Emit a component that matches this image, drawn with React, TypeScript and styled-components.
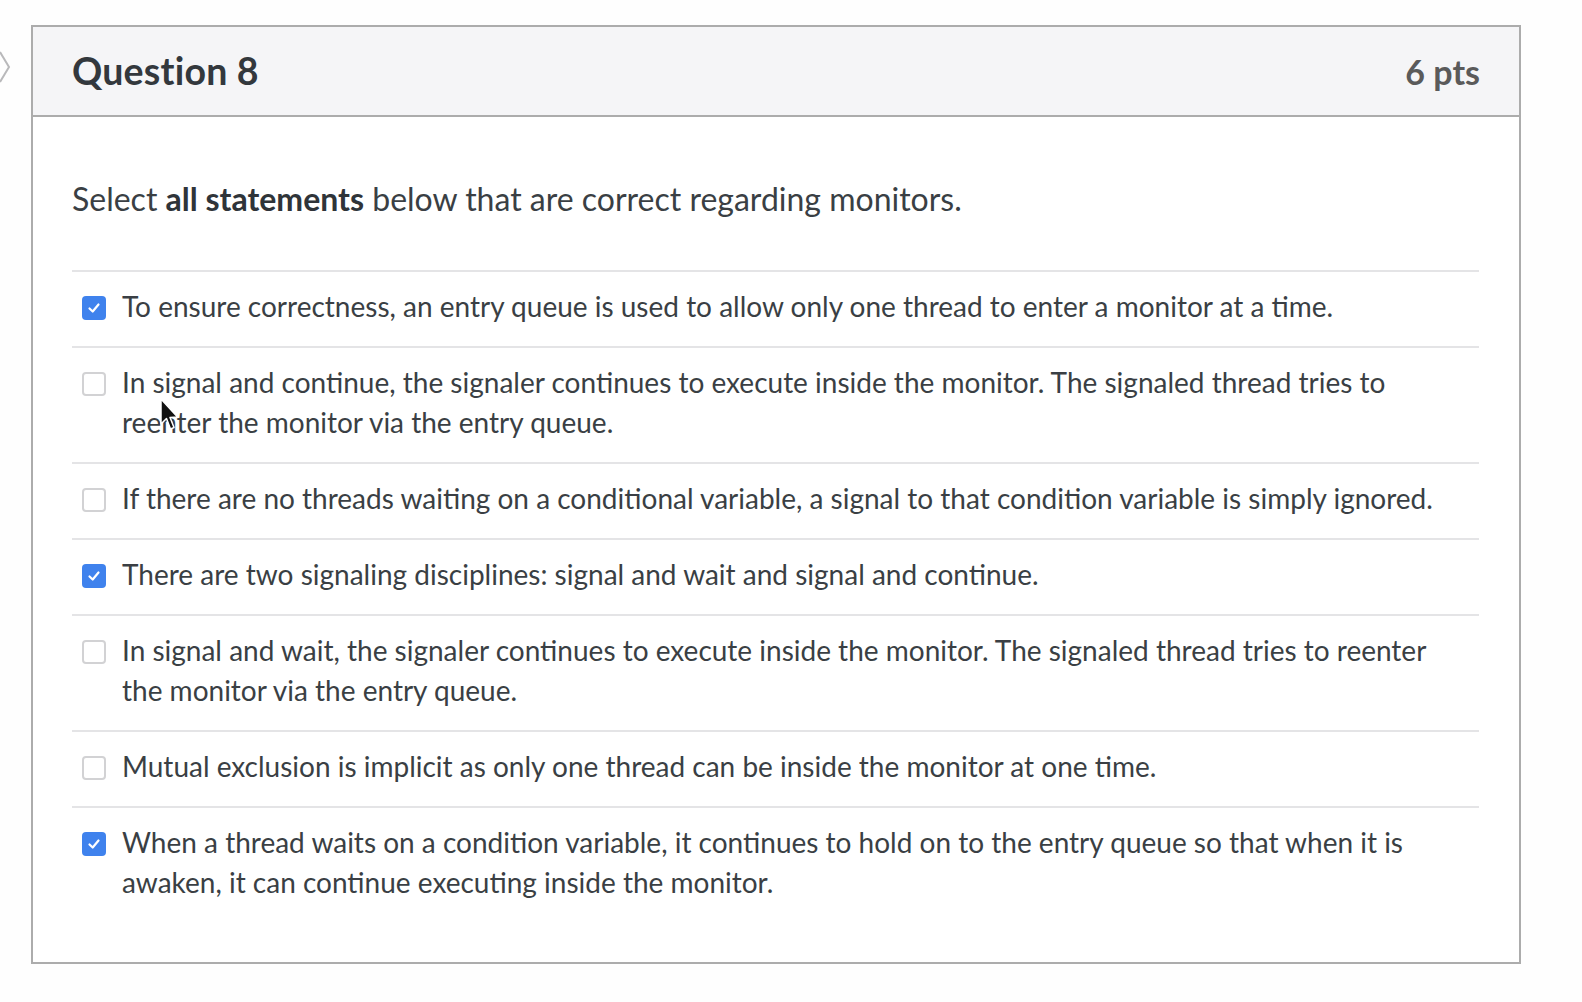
import React from 'react';
import styled, { createGlobalStyle } from 'styled-components';

const GlobalStyle = createGlobalStyle`
  html, body {
    margin: 0;
    padding: 0;
    background: #fefefe;
  }
  body {
    font-family: Lato, "Open Sans", "Liberation Sans", sans-serif;
    color: #3a3f44;
  }
`;

const Page = styled.div`
  position: relative;
  width: 1582px;
  height: 1002px;
  padding: 25px 0 0 31px;
  box-sizing: border-box;
`;

const SideChevron = styled.svg`
  position: absolute;
  left: -6px;
  top: 50px;
`;

const Card = styled.section`
  width: 1490px;
  box-sizing: border-box;
  border: 2px solid #acacac;
  background: #fff;
`;

const Header = styled.header`
  display: flex;
  align-items: center;
  justify-content: space-between;
  height: 88px;
  padding: 0 39px 0 39px;
  background: #f5f5f7;
  border-bottom: 2px solid #acacac;
`;

const Title = styled.h2`
  margin: 0;
  font-size: 37.5px;
  font-weight: 700;
  color: #33383d;
  letter-spacing: 0.2px;
  padding-bottom: 2px;
`;

const Points = styled.div`
  font-size: 34px;
  font-weight: 700;
  color: #5a5a5a;
`;

const Body = styled.div`
  padding: 62px 40px 40px 39px;
`;

const Prompt = styled.p`
  margin: 0 0 51px;
  font-size: 32px;
  line-height: 40px;
  color: #3a3f44;
  & strong {
    font-weight: 700;
    color: #2f3439;
  }
`;

const Answers = styled.div`
  display: flex;
  flex-direction: column;
`;

const Answer = styled.label`
  display: flex;
  align-items: flex-start;
  gap: 16px;
  padding: 14px 0 20px 10px;
  border-top: 2px solid #e4e4e6;
  font-size: 28px;
  line-height: 40px;
  color: #3a3f44;
`;

const Box = styled.span<{ $checked: boolean }>`
  flex: none;
  width: 24px;
  height: 24px;
  margin-top: 10px;
  box-sizing: border-box;
  border-radius: 4px;
  display: flex;
  align-items: center;
  justify-content: center;
  border: ${(p) => (p.$checked ? 'none' : '2px solid #d2d2d4')};
  background: ${(p) => (p.$checked ? '#3f82ed' : '#fff')};
`;

const AnswerText = styled.span`
  flex: 1;
  padding-right: 20px;
`;

const Cursor = styled.svg`
  position: absolute;
  left: 159px;
  top: 398px;
`;

const answers = [
  { text: 'To ensure correctness, an entry queue is used to allow only one thread to enter a monitor at a time.', checked: true },
  { text: 'In signal and continue, the signaler continues to execute inside the monitor. The signaled thread tries to reenter the monitor via the entry queue.', checked: false },
  { text: 'If there are no threads waiting on a conditional variable, a signal to that condition variable is simply ignored.', checked: false },
  { text: 'There are two signaling disciplines: signal and wait and signal and continue.', checked: true },
  { text: 'In signal and wait, the signaler continues to execute inside the monitor. The signaled thread tries to reenter the monitor via the entry queue.', checked: false },
  { text: 'Mutual exclusion is implicit as only one thread can be inside the monitor at one time.', checked: false },
  { text: 'When a thread waits on a condition variable, it continues to hold on to the entry queue so that when it is awaken, it can continue executing inside the monitor.', checked: true },
];

function Check() {
  return (
    <svg width="16" height="16" viewBox="0 0 16 16">
      <path d="M3.5 8.5 L6.7 11.5 L12.5 4.5" fill="none" stroke="#fff" strokeWidth="2.2" strokeLinecap="round" strokeLinejoin="round" />
    </svg>
  );
}

export default function App() {
  return (
    <Page>
      <GlobalStyle />
      <SideChevron width="20" height="36" viewBox="0 0 20 36">
        <path d="M6 2 L15 17 L6 32" fill="none" stroke="#b9b9bb" strokeWidth="2" />
      </SideChevron>
      <Card>
        <Header>
          <Title>Question 8</Title>
          <Points>6 pts</Points>
        </Header>
        <Body>
          <Prompt>
            Select <strong>all statements</strong> below that are correct regarding monitors.
          </Prompt>
          <Answers>
            {answers.map((a, i) => (
              <Answer key={i}>
                <Box $checked={a.checked}>{a.checked && <Check />}</Box>
                <AnswerText>{a.text}</AnswerText>
              </Answer>
            ))}
          </Answers>
        </Body>
      </Card>
      <Cursor width="20" height="34" viewBox="0 0 20 34">
        <path d="M2 1 L2 26 L7.5 20.5 L11.5 31 L15 29.5 L11 19.5 L18.5 19 Z" fill="#111" stroke="#fff" strokeWidth="1.5" strokeLinejoin="round" />
      </Cursor>
    </Page>
  );
}
